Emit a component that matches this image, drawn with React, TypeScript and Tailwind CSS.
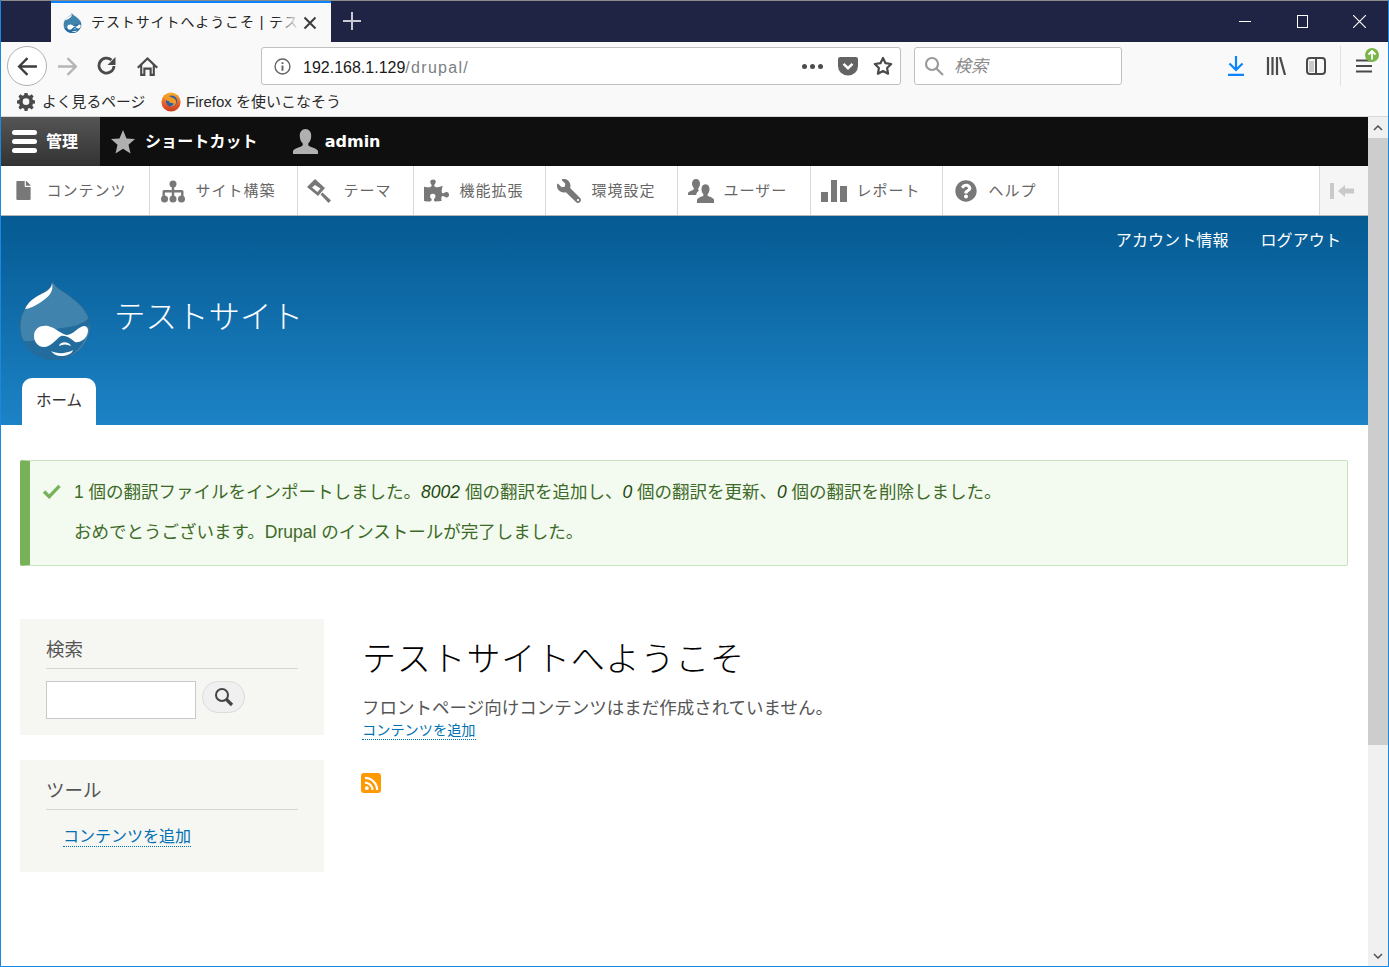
import type { ReactNode } from 'react';
import { FaFile, FaPuzzlePiece, FaQuestionCircle, FaWrench } from 'react-icons/fa';

const uiFont = "font-['Liberation_Sans','Noto_Sans_CJK_JP',sans-serif]";

const DrupalDrop = ({ className }: { className: string }) => (
  <svg viewBox="0 0 72 80" className={className}>
    <path
      d="M33 1C34 8 26 11 20 15 10 21 1 31 1 47c0 19 16 33 35 33s35-16 35-33C71 30 57 21 48 14 42 10 36 7 33 1z"
      fill="#4084ae"
      stroke="#2a6690"
      strokeWidth="0.8"
    />
    <path d="M70 38c2 22-15 42-34 42C20 80 8 70 3 60c15 6 25-10 39-12 12-1 22-4 28-10z" fill="#236c9e" />
    <path
      d="M15 56c0-8 7-11 14-10 8 2 13 8 19 9 6 0 12-9 17-9 4 0 5 4 3 9-2 5-8 8-12 7-5-4-9-7-14-6-6 4-10 11-17 11-6 0-10-5-10-11z"
      fill="#fff"
    />
    <path d="M32 71c6 3 15 3 22-1-1 4-7 6-12 6-4 0-8-2-10-5zM40 66c1-5 10-5 12 0-4-2-8-2-12 0z" fill="#fff" />
    <path d="M33 3c0 7-9 10-16 14-5 3-9 7-11 12 4 0 10-3 16-7 8-5 13-11 11-19z" fill="#fff" />
  </svg>
);

const FirefoxLogo = () => (
  <svg viewBox="0 0 20 20" className="h-5 w-5">
    <defs>
      <linearGradient id="ff" x1="0" y1="0" x2="0" y2="1">
        <stop offset="0" stopColor="#f6b42b" />
        <stop offset="0.55" stopColor="#e8622a" />
        <stop offset="1" stopColor="#c93a1c" />
      </linearGradient>
    </defs>
    <circle cx="10" cy="10" r="9.6" fill="url(#ff)" />
    <circle cx="10.500" cy="9" r="5.600" fill="#2b5fa8" />
    <path d="M3 5c2-2 5-1 7 0 3 1 6 3 5 6-1 3-4 4-6 3 3 0 4-2 3-3-2 0-4 0-4-2-3 0-4-2-5-4z" fill="#f39a25" />
  </svg>
);

const TrayLink = ({ icon, label, width }: { icon: ReactNode; label: string; width: string }) => (
  <div className={`flex h-full items-center border-r border-[#d9d9d9] ${width}`}>
    <div className="flex w-[45.500px] shrink-0 items-center justify-center">{icon}</div>
    <span className="pt-[2px] text-[15px] tracking-[1px] text-[#666]">{label}</span>
  </div>
);

const BrowserChrome = () => (
  <>
    <div className="flex h-[42px] shrink-0 border-t border-[#8b8b8b] bg-[#1f2344] pl-[50px]">
      <div className="flex w-[280px] items-center border-t-2 border-[#0a84ff] bg-[#f9f9f9] pl-[12px]">
        <DrupalDrop className="h-[20px] w-[19px]" />
        <div className="relative ml-[9px] w-[209px] shrink-0 pb-[2px]">
          <span className="whitespace-nowrap text-[14px] leading-none tracking-[0.9px] text-[#222]">テストサイトへようこそ | テス</span>
          <div className="absolute inset-y-0 right-0 w-[24px] bg-gradient-to-r from-transparent to-[#f9f9f9]" />
        </div>
        <svg viewBox="0 0 14 14" className="ml-[3px] h-[14px] w-[14px]" stroke="#3d3d3d" strokeWidth="2" fill="none">
          <path d="M1.500 1.500l11 11M12.500 1.500l-11 11" />
        </svg>
      </div>
      <svg viewBox="0 0 18 18" className="ml-[12px] mt-[11px] h-[18px] w-[18px]" stroke="#c9cad3" strokeWidth="2" fill="none">
        <path d="M9 0v18M0 9h18" />
      </svg>
      <div className="ml-auto flex">
        <div className="flex w-[58px] items-center justify-center">
          <div className="h-px w-[12px] bg-white" />
        </div>
        <div className="flex w-[56px] items-center justify-center">
          <div className="h-[13px] w-[11px] border border-white" />
        </div>
        <div className="flex w-[58px] items-center justify-center">
          <svg viewBox="0 0 12 12" className="h-[13px] w-[13px]" stroke="#fff" strokeWidth="1" fill="none">
            <path d="M0 0l12 12M12 0L0 12" />
          </svg>
        </div>
      </div>
    </div>

    <div className="flex h-[46px] shrink-0 items-center bg-[#f9f9f9] pl-[6px] pt-[2px]">
      <div className="flex h-[40px] w-[40px] items-center justify-center rounded-full border border-[#b1b1b1] bg-white">
        <svg viewBox="0 0 20 20" className="h-[21px] w-[21px]" stroke="#3d3d3d" strokeWidth="2.200" fill="none">
          <path d="M19 10H2M10 2l-8 8 8 8" />
        </svg>
      </div>
      <svg viewBox="0 0 20 20" className="ml-[10px] h-[21px] w-[21px]" stroke="#b5b5b5" strokeWidth="2.200" fill="none">
        <path d="M1 10h17M10 2l8 8-8 8" />
      </svg>
      <svg viewBox="0 0 20 20" className="ml-[19px] h-[20px] w-[20px]" stroke="#4a4a4a" strokeWidth="2.800" fill="none">
        <path d="M17 10a7.500 7.500 0 1 1-2.500-6" />
        <path d="M18.500 1v8h-8z" fill="#4a4a4a" stroke="none" />
      </svg>
      <svg viewBox="0 0 20 20" className="ml-[20px] h-[21px] w-[21px]" fill="#4a4a4a">
        <path d="M10 1L0 10.500l1.400 1.400L3 10.400V19h5v-6h4v6h5v-8.600l1.600 1.500 1.400-1.400z M5 17V8.500l5-4.700 5 4.700V17h-1v-6H6v6z" fillRule="evenodd" />
      </svg>
      <div className="ml-[103px] flex h-[38px] w-[640px] items-center rounded-[3px] border border-[#c0c0c0] bg-white pl-[12px]">
        <svg viewBox="0 0 16 16" className="h-[17px] w-[17px]" stroke="#636363" strokeWidth="1.300" fill="none">
          <circle cx="8" cy="8" r="7" />
          <path d="M8 7v5M8 4v1.600" strokeWidth="1.800" />
        </svg>
        <span className="ml-[12px] pt-[3px] text-[16px] text-[#1a1a1a]">
          192.168.1.129<span className="tracking-[1.300px] text-[#7a7f85]">/drupal/</span>
        </span>
        <div className="ml-auto flex gap-[3px]">
          <div className="h-[5px] w-[5px] rounded-full bg-[#4d4d4d]" />
          <div className="h-[5px] w-[5px] rounded-full bg-[#4d4d4d]" />
          <div className="h-[5px] w-[5px] rounded-full bg-[#4d4d4d]" />
        </div>
        <svg viewBox="0 0 18 18" className="ml-[15px] h-[20px] w-[20px]">
          <path d="M2 1h14a2 2 0 0 1 2 2v6a9 8.500 0 0 1-18 0V3a2 2 0 0 1 2-2z" fill="#636363" />
          <path d="M5 7l4 4 4-4" stroke="#fff" strokeWidth="2.200" fill="none" />
        </svg>
        <svg viewBox="0 0 20 20" className="ml-[15px] mr-[7px] h-[20px] w-[20px]" stroke="#4a4a4a" strokeWidth="2.200" fill="none" strokeLinejoin="round">
          <path d="M10 2l2.500 5.200 5.700.8-4.100 4 1 5.700-5.100-2.700-5.100 2.700 1-5.700-4.100-4 5.700-.8z" />
        </svg>
      </div>
      <div className="ml-[13px] flex h-[38px] w-[208px] items-center rounded-[3px] border border-[#c0c0c0] bg-white pl-[9px]">
        <svg viewBox="0 0 20 20" className="h-[20px] w-[20px]" stroke="#9a9a9a" strokeWidth="2.200" fill="none">
          <circle cx="8" cy="8" r="6" />
          <path d="M12.500 12.500L19 19" />
        </svg>
        <span className="ml-[10px] pt-[2px] text-[17px] italic text-[#8a8a8a]">検索</span>
      </div>
      <svg viewBox="0 0 18 20" className="ml-[105px] h-[20px] w-[18px]" stroke="#0a84ff" strokeWidth="2.200" fill="none">
        <path d="M9 0v13M2.500 7.500L9 14l6.500-6.500M1 18.800h16" />
      </svg>
      <svg viewBox="0 0 20 18" className="ml-[21px] h-[18px] w-[20px]" stroke="#4a4a4a" strokeWidth="2.200" fill="none">
        <path d="M2 0v18M6.500 0v18M11 0v18M14 0l5 18" />
      </svg>
      <svg viewBox="0 0 20 18" className="ml-[20px] h-[18px] w-[20px]" stroke="#4a4a4a" strokeWidth="2" fill="none">
        <rect x="1" y="1" width="18" height="16" rx="3" />
        <path d="M10 1v16" />
        <path d="M3 4h5v11H3z" fill="#c9c9c9" stroke="none" />
      </svg>
      <div className="ml-[14px] h-[40px] w-px bg-[#e2e2e2]" />
      <div className="relative ml-[15px]">
        <svg viewBox="0 0 16 14" className="h-[14px] w-[16px]" stroke="#4a4a4a" strokeWidth="2.200">
          <path d="M0 1.500h16M0 7h16M0 12.500h16" />
        </svg>
        <div className="absolute -right-[7px] -top-[11px] flex h-[14px] w-[14px] items-center justify-center rounded-full bg-[#7ab648]">
          <svg viewBox="0 0 10 10" className="h-[10px] w-[10px]" stroke="#fff" strokeWidth="1.800" fill="none">
            <path d="M5 9.500V1M1.500 4.500L5 1l3.500 3.500" />
          </svg>
        </div>
      </div>
    </div>

    <div className="flex h-[29px] shrink-0 items-center border-b border-[#d8d8d8] bg-[#f9f9f9] pl-[16px] text-[15px] text-[#2a2a2a]">
      <svg viewBox="0 0 18 18" className="h-[18px] w-[18px]" fill="#4a4a4a">
        <path
          fillRule="evenodd"
          d="M7.500 0h3l.5 2.500 1.700.7L15 1.800 17 4l-1.400 2.100.7 1.700 2.700.5v3l-2.700.5-.7 1.700L17 15.600 15 17.700l-2.300-1.400-1.700.7-.5 2.500h-3L7 17l-1.700-.7L3 17.700 1 15.600l1.400-2.100-.7-1.700L-1 11.300v-3l2.700-.5.700-1.700L1 4l2-2.200 2.300 1.400L7 2.500zM9 6a3.500 3.500 0 1 0 0 7 3.500 3.500 0 0 0 0-7z"
          transform="scale(.95) translate(.5 -.4)"
        />
      </svg>
      <span className="ml-[7px] w-[104px] whitespace-nowrap text-[14.800px]">よく見るページ</span>
      <div className="ml-[15px] flex items-center">
        <FirefoxLogo />
        <span className="ml-[5px] whitespace-nowrap">Firefox を使いこなそう</span>
      </div>
    </div>
  </>
);

const DrupalToolbar = () => (
  <>
    <div className="flex h-[49px] shrink-0 items-center bg-[#0f0f0f] text-[16px] font-bold text-white">
      <div className="flex h-full w-[99px] items-center bg-gradient-to-b from-[#555] to-[#333] pl-[11px]">
        <div className="flex w-[25px] flex-col gap-[4px]">
          <div className="h-[5px] rounded-full bg-white" />
          <div className="h-[5px] rounded-full bg-white" />
          <div className="h-[5px] rounded-full bg-white" />
        </div>
        <span className="ml-[9px]">管理</span>
      </div>
      <svg viewBox="0 0 24 24" className="ml-[11px] h-[24px] w-[24px]" fill="#b0b0b0">
        <path d="M12 0l3.500 8.400 8.500.7-6.500 5.700 2 8.700L12 18.800l-7.500 4.700 2-8.700L0 9.100l8.500-.7z" />
      </svg>
      <span className="ml-[10px] tracking-[0.1px]">ショートカット</span>
      <svg viewBox="0 0 24 24" className="ml-[35px] h-[25px] w-[25px]" fill="#b0b0b0">
        <path d="M12 0c3.500 0 5.500 2.800 5.500 6.500 0 3-1 5.500-2.500 7-.8 1-.5 2.500.7 3 3 1 7.300 2.500 8.300 4.500v3H0v-3c1-2 5.300-3.500 8.300-4.500 1.200-.5 1.500-2 .7-3-1.500-1.500-2.500-4-2.500-7C6.500 2.800 8.500 0 12 0z" />
      </svg>
      <span className="ml-[7px] font-['DejaVu_Sans',sans-serif] text-[16px]">admin</span>
    </div>
    <div className="flex h-[50px] shrink-0 items-center border-b border-[#b5b5b5] bg-white shadow-[0_1px_3px_rgba(0,0,0,0.3)]">
      <TrayLink width="w-[149px]" label="コンテンツ" icon={<FaFile className="text-[19px] text-[#787878]" />} />
      <TrayLink
        width="w-[148px]"
        label="サイト構築"
        icon={
          <svg viewBox="0 0 24 24" className="h-[24px] w-[26px]" fill="#787878">
            <circle cx="12" cy="5" r="3.500" />
            <circle cx="3.500" cy="20" r="3.500" />
            <circle cx="12" cy="20" r="3.500" />
            <circle cx="20.500" cy="20" r="3.500" />
            <path d="M10.800 7h2.400v4H21a1.500 1.500 0 0 1 1.500 1.500V18h-2.400v-4.500h-6.900V18h-2.400v-4.500H3.900V18H1.500v-5.500A1.500 1.500 0 0 1 3 11h7.800z" />
          </svg>
        }
      />
      <TrayLink
        width="w-[116px]"
        label="テーマ"
        icon={
          <svg viewBox="0 0 24 24" className="-ml-[3px] h-[24px] w-[24px]" fill="#787878">
            <path d="M8 0l10 9-7 8L0 8zM8 6L5 8.500 10.500 13l3-3.500z" fillRule="evenodd" />
            <path d="M13.500 15.500l2-2L24 21.500 21.500 24z" />
          </svg>
        }
      />
      <TrayLink width="w-[132px]" label="機能拡張" icon={<FaPuzzlePiece className="text-[25px] text-[#787878]" />} />
      <TrayLink width="w-[132px]" label="環境設定" icon={<FaWrench className="-scale-x-100 text-[24px] text-[#787878]" />} />
      <TrayLink
        width="w-[133px]"
        label="ユーザー"
        icon={
          <svg viewBox="0 0 26 24" className="h-[24px] w-[26px]" fill="#787878">
            <path d="M8 0c2.500 0 4 2 4 4.500 0 2-.8 3.600-1.600 4.800-.6 1 0 2 .8 2.300-1.500 1-3 2.500-3 4.500H0v-2c.5-1.500 3.500-2.500 5-3 1-.5 1-1.500.5-2.500C4.800 7.500 4 6.500 4 4.500 4 2 5.500 0 8 0z" />
            <path d="M17 5c3 0 4.500 2.200 4.500 5 0 2.200-.8 4-1.700 5-.6.800-.2 2 .7 2.300 2 .7 4.500 1.700 5.500 3.200V24H9v-3.500c1-1.500 3.500-2.500 5.500-3.200.9-.3 1.300-1.500.7-2.300-.9-1-1.700-2.800-1.700-5 0-2.800 1.500-5 4.500-5z" />
          </svg>
        }
      />
      <TrayLink
        width="w-[132px]"
        label="レポート"
        icon={
          <svg viewBox="0 0 26 22" className="h-[22px] w-[26px]" fill="#787878">
            <rect x="0" y="12" width="7" height="10" />
            <rect x="10" y="0" width="6" height="22" />
            <rect x="19" y="6" width="7" height="16" />
          </svg>
        }
      />
      <TrayLink width="w-[116px]" label="ヘルプ" icon={<FaQuestionCircle className="text-[22px] text-[#787878]" />} />
      <div className="ml-auto flex h-full w-[49px] items-center justify-center border-l border-[#d9d9d9] bg-[#f5f5f5] pr-[4px]">
        <svg viewBox="0 0 24 16" className="h-[16px] w-[24px]" fill="#c9c9c9">
          <rect x="0" y="0" width="4" height="16" />
          <path d="M8 8l7-6v3.500h9v5h-9V14z" />
        </svg>
      </div>
    </div>
  </>
);

const SiteHeader = () => (
  <div className="flex h-[209px] shrink-0 flex-col bg-gradient-to-b from-[#055a92] to-[#1c83c6] text-white">
    <div className="flex justify-end gap-[32px] pr-[27px] pt-[15px] text-[16px] leading-[20px] tracking-[0.1px]">
      <span>アカウント情報</span>
      <span>ログアウト</span>
    </div>
    <div className="mt-[29px] flex items-start pl-[18px]">
      <DrupalDrop className="h-[80px] w-[72px]" />
      <div className="ml-[23px] mt-[17px] text-[31.500px] font-light leading-[40px]">テストサイト</div>
    </div>
    <div className="ml-[21px] mt-auto flex h-[47px] w-[74px] items-center justify-center rounded-t-[10px] bg-white pb-[1px] text-[15.500px] text-[#333]">
      ホーム
    </div>
  </div>
);

const StatusMessage = () => (
  <div className="ml-[19px] mt-[35px] flex h-[106px] w-[1328px] shrink-0 items-start rounded-[2px] border border-l-[10px] border-[#c9e1bd] border-l-[#77b259] bg-[#f3faef] text-[17.500px] leading-[40px] text-[#3d6a28]">
    <svg viewBox="0 0 20 16" className="ml-[12px] mt-[23px] h-[15px] w-[20px]" stroke="#77b259" strokeWidth="3.600" fill="none">
      <path d="M1.500 8l5.500 5.500L18 2" />
    </svg>
    <div className="ml-[12px] mt-[11px] whitespace-nowrap">
      <p>
        1 個の翻訳ファイルをインポートしました。<em className="text-[#24480f]">8002</em> 個の翻訳を追加し、<em className="text-[#24480f]">0</em> 個の翻訳を更新、<em className="text-[#24480f]">0</em> 個の翻訳を削除しました。
      </p>
      <p>おめでとうございます。Drupal のインストールが完了しました。</p>
    </div>
  </div>
);

const Sidebar = () => (
  <div className="ml-[19px] flex w-[304px] shrink-0 flex-col gap-[25px]">
    <div className="h-[116px] bg-[#f6f6f2] px-[26px] pt-[19px]">
      <h2 className="border-b border-[#d6d6d0] pb-[6px] text-[18.500px] leading-[24px] text-[#555]">検索</h2>
      <div className="mt-[12px] flex items-start">
        <div className="h-[38px] w-[150px] border border-[#c9c9c9] bg-white" />
        <div className="ml-[6px] flex h-[32px] w-[43px] items-center justify-center rounded-[16px] border border-[#dcdcdc] bg-[#f0f0f0]">
          <svg viewBox="0 0 20 20" className="h-[20px] w-[20px]" fill="none" stroke="#444">
            <circle cx="8" cy="8" r="6" strokeWidth="2" />
            <path d="M12.500 12.500L18 18" strokeWidth="3.200" />
          </svg>
        </div>
      </div>
    </div>
    <div className="h-[112px] bg-[#f6f6f2] px-[26px] pt-[19px]">
      <h2 className="border-b border-[#d6d6d0] pb-[6px] text-[18.500px] leading-[24px] text-[#555]">ツール</h2>
      <div className="ml-[17px] mt-[17px] w-fit border-b border-dotted border-[#0071b3] text-[16px] leading-[19px] text-[#0071b3]">
        コンテンツを追加
      </div>
    </div>
  </div>
);

const MainContent = () => (
  <div className="ml-[38px] min-w-0 flex-1">
    <h1 className="mt-[14px] text-[34px] font-light leading-[52px] tracking-[0.8px] text-black">テストサイトへようこそ</h1>
    <p className="mt-[11px] text-[17.500px] leading-[24px] text-[#555]">フロントページ向けコンテンツはまだ作成されていません。</p>
    <div className="mt-[2px] w-fit border-b border-dotted border-[#0071b3] text-[14.200px] leading-[17px] text-[#0071b3]">コンテンツを追加</div>
    <div className="mt-[33px] -ml-[1px] flex h-[20px] w-[20px] items-center justify-center rounded-[3px] bg-[#ff9900]">
      <svg viewBox="0 0 16 16" className="h-[15px] w-[15px]" fill="none" stroke="#fff" strokeWidth="2.400">
        <circle cx="3" cy="13" r="2" fill="#fff" stroke="none" />
        <path d="M1 7a8 8 0 0 1 8 8M1 2a13 13 0 0 1 13 13" />
      </svg>
    </div>
  </div>
);

const Scrollbar = () => (
  <div className="flex w-[20px] shrink-0 flex-col bg-[#f0f0f0]">
    <div className="flex h-[21px] shrink-0 items-center justify-center">
      <svg viewBox="0 0 10 6" className="h-[6px] w-[10px]" stroke="#505050" strokeWidth="1.500" fill="none">
        <path d="M1 5l4-4 4 4" />
      </svg>
    </div>
    <div className="h-[607px] shrink-0 bg-[#cdcdcd]" />
    <div className="mt-auto flex h-[21px] shrink-0 items-center justify-center">
      <svg viewBox="0 0 10 6" className="h-[6px] w-[10px]" stroke="#505050" strokeWidth="1.500" fill="none">
        <path d="M1 1l4 4 4-4" />
      </svg>
    </div>
  </div>
);

export default function App() {
  return (
    <div className={`flex h-[967px] w-[1389px] flex-col overflow-hidden border-x border-b border-[#1a88e0] bg-white ${uiFont}`}>
      <BrowserChrome />
      <div className="flex min-h-0 flex-1">
        <div className="flex w-[1367px] shrink-0 flex-col">
          <DrupalToolbar />
          <SiteHeader />
          <StatusMessage />
          <div className="mt-[53px] flex">
            <Sidebar />
            <MainContent />
          </div>
        </div>
        <Scrollbar />
      </div>
    </div>
  );
}
